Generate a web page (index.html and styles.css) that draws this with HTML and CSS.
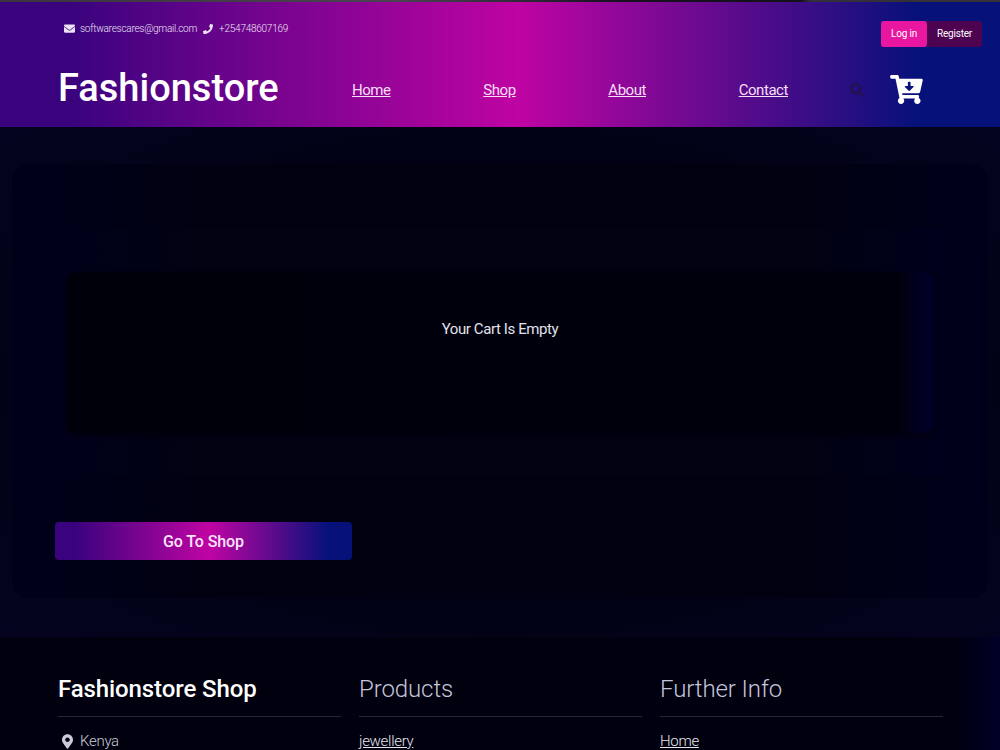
FILE: index.html
```
<!DOCTYPE html>
<html lang="en">
<head>
    <meta charset="UTF-8">
    <meta name="viewport" content="width=device-width, initial-scale=1.0">
    <title>Fashionstore</title>
    <link rel="stylesheet" href="styles.css">
</head>
<body>
    <header class="header">
        <div class="topbar">
            <div class="contact-info">
                <svg class="icon-mail" viewBox="0 0 512 512"><path d="M502.3 190.8c3.9-3.1 9.7-.2 9.7 4.7V400c0 26.5-21.5 48-48 48H48c-26.500 0-48-21.500-48-48V195.600c0-5 5.700-7.800 9.700-4.700 22.400 17.400 52.100 39.500 154.100 113.600 21.100 15.400 56.700 47.800 92.200 47.600 35.700.3 72-32.800 92.300-47.600 102-74.100 131.600-96.300 154-113.700zM256 320c23.200.4 56.600-29.200 73.400-41.400 132.700-96.300 142.800-104.700 173.400-128.700 5.800-4.500 9.200-11.500 9.200-18.900v-19c0-26.500-21.500-48-48-48H48c-26.500 0-48 21.500-48 48v19c0 7.400 3.400 14.300 9.200 18.900 30.600 23.900 40.700 32.400 173.400 128.700 16.800 12.200 50.200 41.800 73.400 41.400z"/></svg>
                <span class="email">softwarescares@gmail.com</span>
                <svg class="icon-phone" viewBox="0 0 512 512"><path d="M493.4 24.6l-104-24c-11.300-2.600-22.900 3.300-27.500 13.900l-48 112c-4.200 9.800-1.400 21.300 6.900 28l60.600 49.600c-36 76.700-98.900 140.500-177.200 177.200l-49.600-60.600c-6.800-8.300-18.200-11.100-28-6.900l-112 48C3.900 366.500-2 378.100.6 389.400l24 104C27.100 504.200 36.700 512 48 512c256.100 0 464-207.500 464-464 0-11.200-7.700-20.900-18.600-23.400z"/></svg>
                <span>+254748607169</span>
            </div>
            <div class="auth">
                <a class="btn login">Log in</a>
                <a class="btn register">Register</a>
            </div>
        </div>
        <div class="navbar">
            <h1 class="logo">Fashionstore</h1>
            <nav class="menu">
                <a href="#">Home</a>
                <a href="#">Shop</a>
                <a href="#">About</a>
                <a href="#">Contact</a>
            </nav>
            <svg class="icon-search" viewBox="0 0 512 512"><path d="M505 442.700L405.300 343c-4.500-4.500-10.600-7-17-7H372c27.600-35.300 44-79.700 44-128C416 93.100 322.900 0 208 0S0 93.100 0 208s93.100 208 208 208c48.300 0 92.700-16.400 128-44v16.300c0 6.400 2.500 12.500 7 17l99.700 99.700c9.400 9.400 24.600 9.400 33.900 0l28.300-28.300c9.400-9.400 9.400-24.600.1-34zM208 336c-70.700 0-128-57.200-128-128 0-70.700 57.200-128 128-128 70.700 0 128 57.200 128 128 0 70.700-57.200 128-128 128z"/></svg>
            <svg class="icon-cart" viewBox="0 0 576 512"><path d="M504.717 320H211.572l6.545 32h268.418c15.401 0 26.816 14.301 23.403 29.319l-5.517 24.276C523.112 414.668 536 433.828 536 456c0 31.202-25.519 56.444-56.824 55.994-29.823-.429-54.350-24.631-55.155-54.447-.44-16.287 6.085-31.049 16.803-41.548H231.176C241.553 426.165 248 440.326 248 456c0 31.813-26.528 57.431-58.670 55.938-28.540-1.325-51.751-24.385-53.251-52.917-1.158-22.034 10.436-41.455 28.051-51.586L93.883 64H24C10.745 64 0 53.255 0 40V24C0 10.745 10.745 0 24 0h102.529c11.401 0 21.228 8.021 23.513 19.190L159.208 64H551.990c15.401 0 26.816 14.301 23.403 29.319l-47.273 208C525.637 312.246 515.923 320 504.717 320zM403.029 192H360v-60c0-6.627-5.373-12-12-12h-24c-6.627 0-12 5.373-12 12v60h-43.029c-10.691 0-16.045 12.926-8.485 20.485l67.029 67.029c4.686 4.686 12.284 4.686 16.971 0l67.029-67.029c7.559-7.559 2.205-20.485-8.486-20.485z"/></svg>
        </div>
    </header>

    <main class="cart">
        <div class="cart-panel">
            <div class="cart-wrap">
                <div class="cart-box">
                    <p>Your Cart Is Empty</p>
                </div>
            </div>
            <a class="shop-btn">Go To Shop</a>
        </div>
    </main>

    <footer class="footer">
        <div class="footer-col">
            <h2 class="brand">Fashionstore Shop</h2>
            <p class="address">
                <svg class="icon-pin" viewBox="0 0 384 512"><path d="M172.268 501.670C26.970 291.031 0 269.413 0 192 0 85.961 85.961 0 192 0s192 85.961 192 192c0 77.413-26.970 99.031-172.268 309.670-9.535 13.774-29.930 13.773-39.464 0zM192 272c44.183 0 80-35.817 80-80s-35.817-80-80-80-80 35.817-80 80 35.817 80 80 80z"/></svg>
                <span>Kenya</span>
            </p>
        </div>
        <div class="footer-col">
            <h2>Products</h2>
            <a href="#">jewellery</a>
        </div>
        <div class="footer-col">
            <h2>Further Info</h2>
            <a href="#">Home</a>
        </div>
    </footer>
</body>
</html>
```
FILE: styles.css
```
* {
    margin: 0;
    padding: 0;
    box-sizing: border-box;
}

html {
    overflow: hidden;
}

body {
    height: 750px;
    overflow: hidden;
    background: #000010;
    font-family: Roboto, sans-serif;
    font-weight: 300;
    color: #fff;
}

svg {
    display: block;
    flex: none;
    fill: currentColor;
}

.header {
    height: 127px;
    border-style: solid;
    border-width: 2px 0 0;
    border-image: linear-gradient(90deg, #3b3440, #4a4450 40%, #181020 62%, #15101c 80%, #33303c 81%, #33303c) 1;
    background: linear-gradient(90deg, #3a037e 0%, #3a037e 7%, #bf04a3 52%, #06117a 92%, #06117a 100%);
}

.topbar {
    display: flex;
    justify-content: space-between;
    height: 50px;
    padding: 19px 18px 0 64px;
}

.contact-info {
    display: flex;
    align-items: center;
    height: 15px;
    font-size: 10px;
    letter-spacing: -0.25px;
    color: #eee2f6;
}

.icon-mail {
    width: 11px;
    height: 11px;
    margin-right: 5px;
}

.icon-phone {
    width: 10px;
    height: 10px;
    margin: 0 6px;
}

.auth {
    display: flex;
    height: 26px;
}

.btn {
    display: flex;
    align-items: center;
    justify-content: center;
    padding-bottom: 1px;
    border-radius: 3px;
    font-size: 10px;
    font-weight: 400;
    letter-spacing: -0.2px;
}

.login {
    width: 46px;
    background: #e916a0;
}

.register {
    width: 55px;
    background: #4d0350;
}

.navbar {
    display: flex;
    align-items: center;
    height: 72px;
    padding-left: 58px;
}

.logo {
    width: 294px;
    font-size: 38px;
    font-weight: 500;
    line-height: 44px;
}

.menu {
    display: flex;
    justify-content: space-between;
    width: 436px;
    padding-top: 4px;
    font-size: 15px;
    font-weight: 400;
    letter-spacing: -0.45px;
}

.menu a {
    color: #f8dff8;
}

.icon-search {
    width: 14px;
    height: 14px;
    margin: 3px 26px 0 62px;
    color: #24124f;
}

.icon-cart {
    width: 33px;
    height: 29px;
    margin-top: 3px;
}

.cart {
    height: 510px;
    padding: 37px 12px;
    background: radial-gradient(ellipse at center, #010112 50%, #040420 100%);
}

.cart-panel {
    height: 434px;
    padding: 64px 43px 0;
    border-radius: 16px;
    background: linear-gradient(90deg, #00001b, #010112 18%, #010112 82%, #00001b);
}

.cart-wrap {
    height: 248px;
    padding: 44px 11px;
    background: linear-gradient(90deg, #00001b, #020213 15%, #020213 85%, #00001c);
}

.cart-box {
    height: 161px;
    padding-top: 48px;
    border-radius: 10px;
    background: linear-gradient(90deg, #00000b 0%, #00000d 96%, #00001c 97.5%, #000027 100%);
    box-shadow: 0 2px 5px #00000d;
    text-align: center;
    font-size: 15px;
    font-weight: 400;
    line-height: 18px;
    letter-spacing: -0.4px;
    color: #e2e2ed;
}

.shop-btn {
    display: flex;
    align-items: center;
    justify-content: center;
    width: 297px;
    height: 38px;
    margin-top: 46px;
    border-radius: 4px;
    background: linear-gradient(90deg, #3a037e 0%, #3a037e 7%, #bf04a3 52%, #06117a 92%, #06117a 100%);
    font-size: 16px;
    font-weight: 500;
    letter-spacing: -0.1px;
    color: #fce4fb;
}

.footer {
    display: grid;
    grid-template-columns: repeat(3, 283px);
    gap: 18px;
    height: 113px;
    padding: 38px 0 0 58px;
    background: linear-gradient(90deg, #00000e 95%, #000026 100%);
}

.footer-col h2 {
    height: 42px;
    margin-bottom: 14px;
    border-bottom: 1px solid #252936;
    font-size: 24px;
    font-weight: 300;
    line-height: 28px;
    letter-spacing: -0.1px;
    color: #c4c6dc;
}

.footer-col .brand {
    font-weight: 500;
    color: #fff;
}

.footer-col a {
    display: block;
    font-size: 15px;
    line-height: 20px;
    letter-spacing: -0.3px;
    color: #e5e5ee;
}

.address {
    display: flex;
    align-items: center;
    gap: 7px;
    padding-left: 4px;
    font-size: 15px;
    line-height: 20px;
    letter-spacing: -0.3px;
    color: #c9cbdc;
}

.icon-pin {
    width: 11px;
    height: 15px;
}
```
